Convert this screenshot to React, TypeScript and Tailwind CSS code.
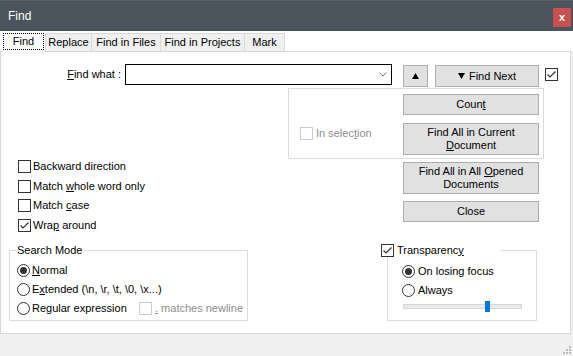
import React from "react";

const Check = ({ checked = false, disabled = false }: { checked?: boolean; disabled?: boolean }) => (
  <span
    className={
      disabled
        ? "w-[13px] h-[13px] border border-[#cccccc] bg-white flex items-center justify-center shrink-0"
        : "w-[13px] h-[13px] border border-[#333333] bg-white flex items-center justify-center shrink-0"
    }
  >
    {checked && (
      <svg width="11" height="11" viewBox="0 0 11 11">
        <path d="M1.5 5.5 L4 8 L9.5 2.5" stroke="#333333" strokeWidth="1.2" fill="none" />
      </svg>
    )}
  </span>
);

const Radio = ({ checked = false }: { checked?: boolean }) => (
  <span className="w-[13px] h-[13px] rounded-full border border-[#333333] bg-white flex items-center justify-center shrink-0">
    {checked && <span className="w-[7px] h-[7px] rounded-full bg-[#333333]" />}
  </span>
);

const Btn = ({ children, className }: { children: React.ReactNode; className: string }) => (
  <div
    className={
      "bg-[#e1e1e1] border border-[#adadad] flex items-center justify-center text-center leading-[13px] shrink-0 " +
      className
    }
  >
    {children}
  </div>
);

const U = ({ children }: { children: React.ReactNode }) => <span className="underline underline-offset-[1px]">{children}</span>;

export default function App() {
  return (
    <div
      className="w-[573px] h-[356px] bg-[#f0f0f0] overflow-hidden relative flex flex-col text-[11px] text-black"
      style={{ fontFamily: '"Liberation Sans", Arial, sans-serif' }}
    >
      {/* Title bar */}
      <div className="h-[31px] bg-[#4b545c] border-t border-[#58616a] flex items-start justify-between pl-[8px] pr-[2px] shrink-0">
        <div className="h-[30px] flex items-center text-white text-[12px]">Find</div>
        <div className="mt-[7px] w-[18px] h-[19px] bg-[#c75050] flex items-center justify-center text-white text-[11px] font-bold leading-none">
          x
        </div>
      </div>

      {/* Tabs */}
      <div className="h-[20px] bg-white flex items-end pl-[2px] shrink-0 relative z-10">
        <div className="w-[43px] h-[20px] bg-white mb-[-1px] flex items-start justify-center pt-[1px]">
          <div className="w-[41px] h-[17px] border border-dotted border-black flex items-center justify-center">Find</div>
        </div>
        <div className="w-[47px] h-[18px] bg-[#f0f0f0] border border-b-0 border-[#d9d9d9] flex items-center justify-center">Replace</div>
        <div className="w-[69px] h-[18px] bg-[#f0f0f0] border border-b-0 border-l-0 border-[#d9d9d9] flex items-center justify-center">Find in Files</div>
        <div className="w-[84px] h-[18px] bg-[#f0f0f0] border border-b-0 border-l-0 border-[#d9d9d9] flex items-center justify-center">Find in Projects</div>
        <div className="w-[40px] h-[18px] bg-[#f0f0f0] border border-b-0 border-l-0 border-[#d9d9d9] flex items-center justify-center">Mark</div>
      </div>

      {/* Panel */}
      <div className="w-[571px] h-[283px] bg-white border border-[#d9d9d9] flex flex-col shrink-0">
        {/* Row 1 */}
        <div className="mt-[12px] h-[23px] flex items-start">
          <div className="w-[120px] h-[21px] flex items-center justify-end">
            <span>
              <U>F</U>ind what :
            </span>
          </div>
          <div className="ml-[4px] w-[267px] h-[21px] border border-black bg-white flex items-center justify-end pr-[4px]">
            <svg width="8" height="5" viewBox="0 0 8 5">
              <path d="M0.5 0.5 L4 4 L7.5 0.5" stroke="#777777" strokeWidth="1" fill="none" />
            </svg>
          </div>
          <Btn className="ml-[11px] mt-[1px] w-[25px] h-[22px]">
            <svg width="7" height="6" viewBox="0 0 7 6">
              <path d="M3.5 0 L7 6 L0 6 Z" fill="#000000" />
            </svg>
          </Btn>
          <Btn className="ml-[7px] mt-[1px] w-[104px] h-[22px]">
            <span className="flex items-center gap-[4px]">
              <svg width="7" height="6" viewBox="0 0 7 6">
                <path d="M0 0 L7 0 L3.5 6 Z" fill="#000000" />
              </svg>
              Find Next
            </span>
          </Btn>
          <div className="ml-[6px] mt-[4px]">
            <Check checked />
          </div>
        </div>

        {/* Row 2 */}
        <div className="mt-[1px] h-[162px] flex">
          <div className="w-[287px] flex flex-col pt-[72px] pl-[17px]">
            <div className="h-[20px] flex items-start">
              <Check />
              <span className="ml-[2px] leading-[13px]">Backward direction</span>
            </div>
            <div className="h-[19px] flex items-start">
              <Check />
              <span className="ml-[2px] leading-[13px]">
                Match <U>w</U>hole word only
              </span>
            </div>
            <div className="h-[20px] flex items-start">
              <Check />
              <span className="ml-[2px] leading-[13px]">
                Match <U>c</U>ase
              </span>
            </div>
            <div className="h-[19px] flex items-start">
              <Check checked />
              <span className="ml-[2px] leading-[13px]">
                Wra<U>p</U> around
              </span>
            </div>
          </div>
          <div className="w-[256px] flex flex-col">
            <div className="h-[71px] border border-[#dcdcdc] flex">
              <div className="w-[114px] pl-[11px] pt-[38px] flex items-start">
                <Check disabled />
                <span className="ml-[3px] leading-[13px] text-[#8d8d8d]">
                  In selec<U>t</U>ion
                </span>
              </div>
              <div className="flex flex-col">
                <Btn className="mt-[5px] w-[136px] h-[21px]">
                  <span>
                    Coun<U>t</U>
                  </span>
                </Btn>
                <Btn className="mt-[8px] w-[136px] h-[32px]">
                  <span>
                    Find All in Current
                    <br />
                    <U>D</U>ocument
                  </span>
                </Btn>
              </div>
            </div>
            <Btn className="ml-[115px] mt-[3px] w-[136px] h-[32px]">
              <span>
                Find All in All <U>O</U>pened
                <br />
                Documents
              </span>
            </Btn>
            <Btn className="ml-[115px] mt-[7px] w-[136px] h-[21px]">Close</Btn>
          </div>
        </div>

        {/* Row 3 */}
        <div className="flex">
          <div className="ml-[8px] w-[239px] h-[71px] border border-[#dcdcdc] relative flex flex-col pl-[7px] pt-[13px]">
            <div className="absolute left-[6px] top-[-8px] h-[14px] bg-white pl-[1px] pr-[3px] flex items-center">Search Mode</div>
            <div className="h-[20px] flex items-start">
              <Radio checked />
              <span className="ml-[2px] leading-[13px]">
                <U>N</U>ormal
              </span>
            </div>
            <div className="h-[19px] flex items-start">
              <Radio />
              <span className="ml-[2px] leading-[13px]">
                E<U>x</U>tended (\n, \r, \t, \0, \x...)
              </span>
            </div>
            <div className="h-[19px] flex items-start">
              <Radio />
              <span className="ml-[2px] w-[107px] leading-[13px]">
                Re<U>g</U>ular expression
              </span>
              <Check disabled />
              <span className="ml-[3px] leading-[13px] text-[#8d8d8d]">
                <U>.</U> matches newline
              </span>
            </div>
          </div>

          <div className="ml-[139px] w-[150px] h-[71px] border border-[#dcdcdc] relative flex flex-col pl-[14px] pt-[14px]">
            <div className="absolute left-[-7px] top-[-8px] w-[120px] h-[14px] bg-white flex items-center">
              <Check checked />
              <span className="ml-[3px]">
                Transparenc<U>y</U>
              </span>
            </div>
            <div className="h-[19px] flex items-start">
              <Radio checked />
              <span className="ml-[3px] leading-[13px]">On losing focus</span>
            </div>
            <div className="h-[17px] flex items-start">
              <Radio />
              <span className="ml-[3px] leading-[13px]">Always</span>
            </div>
            <div className="ml-[1px] w-[119px] h-[11px] relative flex items-center">
              <div className="w-full h-[5px] bg-[#e7eaea] border border-[#d6d6d6]" />
              <div className="absolute left-[82px] top-0 w-[5px] h-[11px] bg-[#0078d7]" />
            </div>
          </div>
        </div>
      </div>

      {/* Resize grip */}
      <svg className="absolute right-[2px] bottom-[2px]" width="8" height="8" viewBox="0 0 8 8">
        <rect x="6" y="0" width="2" height="2" fill="#bcbcbc" />
        <rect x="3" y="3" width="2" height="2" fill="#bcbcbc" />
        <rect x="6" y="3" width="2" height="2" fill="#bcbcbc" />
        <rect x="0" y="6" width="2" height="2" fill="#bcbcbc" />
        <rect x="3" y="6" width="2" height="2" fill="#bcbcbc" />
        <rect x="6" y="6" width="2" height="2" fill="#bcbcbc" />
      </svg>
    </div>
  );
}
